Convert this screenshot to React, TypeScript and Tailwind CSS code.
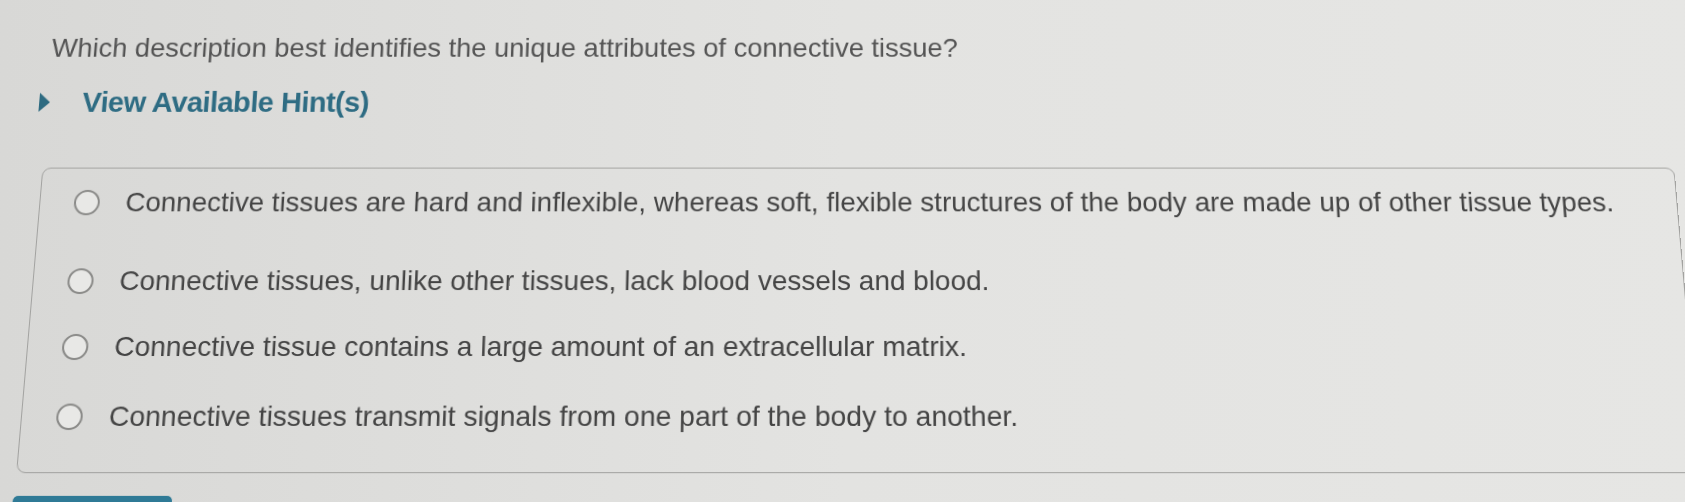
import React from 'react';

const options = [
  {
    text: 'Connective tissues are hard and inflexible, whereas soft, flexible structures of the body are made up of other tissue types.',
    gap: 'mt-0',
  },
  { text: 'Connective tissues, unlike other tissues, lack blood vessels and blood.', gap: 'mt-[46px]' },
  { text: 'Connective tissue contains a large amount of an extracellular matrix.', gap: 'mt-[32px]' },
  { text: 'Connective tissues transmit signals from one part of the body to another.', gap: 'mt-[35px]' },
];

export default function App() {
  return (
    <div
      className="w-[1685px] h-[502px] overflow-hidden bg-linear-to-r from-[#d8d8d6] via-[#e3e3e1] to-[#e6e6e4]"
      style={{ fontFamily: '"Liberation Sans", Arial, sans-serif' }}
    >
      {/* the screen was photographed from below: slight perspective tilt */}
      <div className="h-[502px] origin-[850px_300px] [transform:perspective(1000px)_rotateX(6deg)] pt-[24px]">
        <h1 className="ml-[30px] text-[28px] leading-[32px] text-[#545454]">
          Which description best identifies the unique attributes of connective tissue?
        </h1>

        <button className="mt-[25px] ml-[22px] flex items-center text-left">
          <svg width="11" height="20" viewBox="0 0 11 20">
            <polygon points="0,0 11,10 0,20" fill="#2e6b81" />
          </svg>
          <span className="ml-[33px] text-[29.5px] leading-[32px] font-bold tracking-[-0.5px] text-[#2e6c83]">
            View Available Hint(s)
          </span>
        </button>

        <div className="mt-[52px] ml-[31px] w-[1655px] rounded-[9px] border border-[#a2a2a0] pt-[18px] pb-[37px] pl-[34px]">
          {options.map((o) => (
            <label key={o.text} className={`flex items-center ${o.gap}`}>
              <span className="w-[26px] h-[26px] rounded-full border-2 border-[#8a8a88] bg-[#e8e8e6] shrink-0" />
              <span className="ml-[26px] text-[28px] leading-[34px] text-[#444444]">{o.text}</span>
            </label>
          ))}
        </div>

        <div className="mt-[22px] ml-[30px] w-[156px] h-[30px] rounded-[5px] bg-[#2f7a96]" />
      </div>
    </div>
  );
}
